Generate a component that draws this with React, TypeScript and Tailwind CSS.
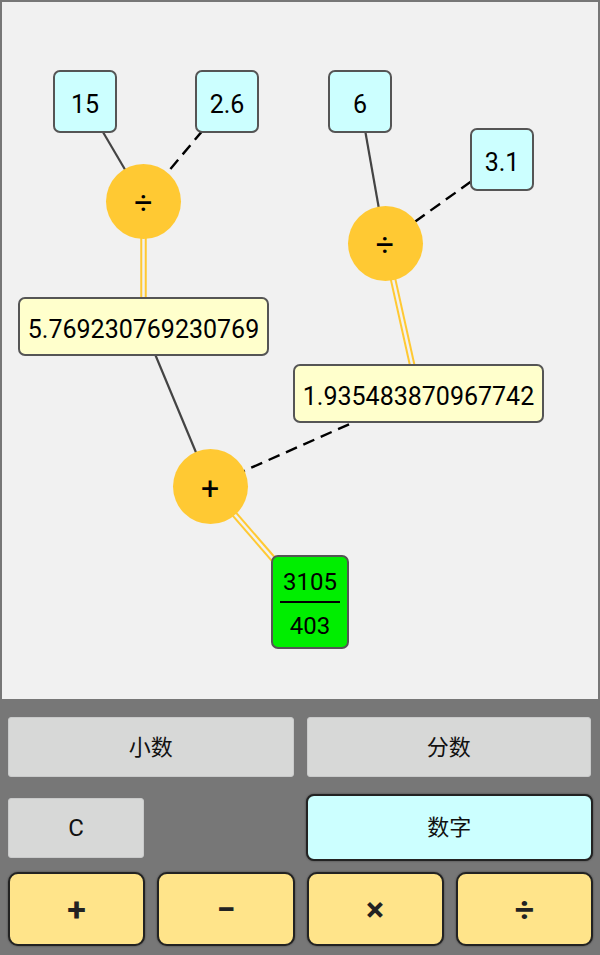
import React from "react"

// page coords of the diagram; the canvas starts at (2,2)
const OX = 2
const OY = 2

type Box = { x: number; y: number; w: number; h: number; text: string; kind: "num" | "val" }
type Op = { cx: number; cy: number; sym: string }

const boxes: Box[] = [
  { x: 53, y: 70, w: 64, h: 63, text: "15", kind: "num" },
  { x: 195, y: 70, w: 64, h: 63, text: "2.6", kind: "num" },
  { x: 328, y: 70, w: 64, h: 63, text: "6", kind: "num" },
  { x: 470, y: 128, w: 64, h: 63, text: "3.1", kind: "num" },
  { x: 18, y: 297, w: 251, h: 59, text: "5.769230769230769", kind: "val" },
  { x: 293, y: 364, w: 251, h: 59, text: "1.935483870967742", kind: "val" },
]

const ops: Op[] = [
  { cx: 143.5, cy: 201, sym: "÷" },
  { cx: 385, cy: 243, sym: "÷" },
  { cx: 210, cy: 486, sym: "+" },
]

type Edge = { a: [number, number]; b: [number, number]; style: "solid" | "dash" | "double" }

const edges: Edge[] = [
  { a: [85, 101.5], b: [143.5, 201], style: "solid" },
  { a: [227, 101.5], b: [143.5, 201], style: "dash" },
  { a: [143.5, 201], b: [143.5, 326.5], style: "double" },
  { a: [360, 101.5], b: [385, 243], style: "solid" },
  { a: [502, 159.5], b: [385, 243], style: "dash" },
  { a: [385, 243], b: [418.5, 393.5], style: "double" },
  { a: [143.5, 326.5], b: [210, 486], style: "solid" },
  { a: [418.5, 393.5], b: [210, 486], style: "dash" },
  { a: [210, 486], b: [310, 601.5], style: "double" },
]

function EdgeLine({ e }: { e: Edge }) {
  const [x1, y1] = [e.a[0] - OX, e.a[1] - OY]
  const [x2, y2] = [e.b[0] - OX, e.b[1] - OY]
  if (e.style === "double") {
    return (
      <g>
        <line x1={x1} y1={y1} x2={x2} y2={y2} stroke="#ffc933" strokeWidth={6.5} />
        <line x1={x1} y1={y1} x2={x2} y2={y2} stroke="#f1f1f1" strokeWidth={2.5} />
      </g>
    )
  }
  if (e.style === "dash") {
    return <line x1={x1} y1={y1} x2={x2} y2={y2} stroke="#000" strokeWidth={2.4} strokeDasharray="12 7" />
  }
  return <line x1={x1} y1={y1} x2={x2} y2={y2} stroke="#444" strokeWidth={2.2} />
}

const font = { fontFamily: 'Roboto, "Noto Sans CJK SC", sans-serif' }

export default function App() {
  return (
    <div className="flex h-[955px] w-[600px] flex-col bg-[#777777]" style={font}>
      <div className="relative mx-[2px] mt-[2px] h-[697px] overflow-hidden bg-[#f1f1f1]">
        <svg className="absolute inset-0" width="596" height="697">
          {edges.map((e, i) => (
            <EdgeLine key={i} e={e} />
          ))}
        </svg>

        {boxes.map((b) => (
          <div
            key={b.text}
            className={`absolute flex items-center justify-center rounded-[7px] border-2 border-[#555] pt-[7px] text-[25px] text-black ${
              b.kind === "num" ? "bg-[#ccffff]" : "bg-[#ffffcc]"
            }`}
            style={{ left: b.x - OX, top: b.y - OY, width: b.w, height: b.h }}
          >
            {b.text}
          </div>
        ))}

        {ops.map((o, i) => (
          <div
            key={i}
            className="absolute flex h-[75px] w-[75px] items-center justify-center rounded-full bg-[#ffc933] pt-[3px] text-[32px] text-black"
            style={{ left: o.cx - 37.5 - OX, top: o.cy - 37.5 - OY }}
          >
            {o.sym}
          </div>
        ))}

        {/* result */}
        <div className="absolute left-[269px] top-[553px] flex h-[94px] w-[78px] flex-col items-center justify-center rounded-[7px] border-2 border-[#555] bg-[#00ee00] pt-[4px] text-[24px] leading-none text-black">
          <span className="pb-[7px]">3105</span>
          <span className="h-[2.5px] w-[60px] bg-black" />
          <span className="pt-[11px]">403</span>
        </div>
      </div>

      <div className="flex flex-col pl-[8px] pr-[7px] pt-[18px]">
        <div className="grid h-[60px] grid-cols-4 gap-x-[12px]">
          <button className="col-span-2 mr-[1px] rounded-[3px] border border-[#c9caca] bg-[#d7d8d7] text-[22px] text-[#111]">
            小数
          </button>
          <button className="col-span-2 mr-[2px] rounded-[3px] border border-[#c9caca] bg-[#d7d8d7] text-[22px] text-[#111]">
            分数
          </button>
        </div>

        <div className="mt-[17px] grid h-[67px] grid-cols-4 gap-x-[12px]">
          <button className="my-auto mr-[1px] h-[60px] rounded-[3px] border border-[#c9caca] bg-[#d7d8d7] text-[24px] text-[#111]">
            C
          </button>
          <div />
          <button className="col-span-2 ml-[-1px] rounded-[8px] border-2 border-[#222] bg-[#ccffff] text-[22px] text-[#111] shadow-[0_0_2px_rgba(0,0,0,0.5)]">
            数字
          </button>
        </div>

        <div className="mt-[11px] grid h-[74px] grid-cols-4 gap-x-[12px]">
          {["+", "−", "×", "÷"].map((s) => (
            <button
              key={s}
              className="rounded-[10px] border-2 border-[#222] bg-[#ffe48a] text-[34px] font-bold text-[#222] shadow-[0_0_2px_rgba(0,0,0,0.5)]"
            >
              {s}
            </button>
          ))}
        </div>
      </div>
    </div>
  )
}
